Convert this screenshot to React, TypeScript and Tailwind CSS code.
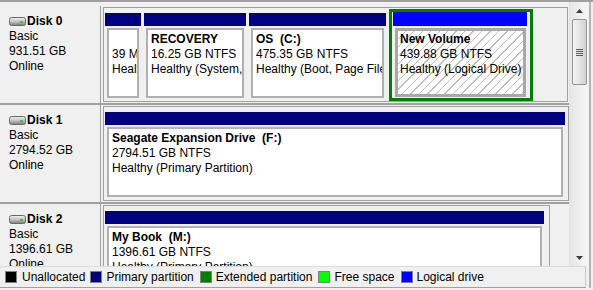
import React from 'react'

const font = "font-['Liberation_Sans',Arial,sans-serif]"

function DiskIcon() {
  return (
    <svg width="17" height="9" viewBox="0 0 17 9" className="shrink-0 mr-[1px]">
      <defs>
        <linearGradient id="dk" x1="0" y1="0" x2="0" y2="1">
          <stop offset="0" stopColor="#f2f2f2" />
          <stop offset="0.5" stopColor="#c4c4c4" />
          <stop offset="1" stopColor="#7a7a7a" />
        </linearGradient>
      </defs>
      <rect x="0.5" y="0.5" width="16" height="8" rx="2" fill="url(#dk)" stroke="#6a6a6a" />
      <rect x="11" y="4" width="3" height="2" fill="#3cc43c" />
    </svg>
  )
}

function Label({ name, size, last }: { name: string; size: string; last?: boolean }) {
  return (
    <div className="w-[101px] shrink-0 border-r border-[#a0a0a0] pl-[9px] pt-[8px]">
      <div className="flex items-center h-[15px] font-bold">
        <span className="-ml-[0px]"><DiskIcon /></span>
        {name}
      </div>
      <div className="h-[15px]">Basic</div>
      <div className="h-[15px]">{size}</div>
      <div className={last ? 'h-[15px]' : 'h-[15px]'}>Online</div>
    </div>
  )
}

function Part({ w, name, size, status }: { w: string; name: string; size: string; status: string }) {
  return (
    <div className={`${w} shrink-0 pr-[3px] pt-[5px] flex flex-col`}>
      <div className="h-[13px] bg-[#000080]" />
      <div className="mt-[2px] mx-[2px] h-[70px] border-2 border-[#b0b0b0] bg-white pl-[3px] pt-[2px] overflow-hidden whitespace-pre">
        <div className="h-[15px] font-bold">{name}</div>
        <div className="h-[15px]">{size}</div>
        <div className="h-[15px]">{status}</div>
      </div>
    </div>
  )
}

function NewVolume() {
  return (
    <div className="w-[144px] h-[92px] shrink-0 mt-[1px] border-[3px] border-[#008000] pl-[1px] pr-[3px] flex flex-col">
      <div className="h-[14px] bg-[#0000ff]" />
      <div className="mt-[2px] ml-[2px] mr-[1px] h-[69px] border-[3px] border-[#a8a8a8] pl-[2px] pt-[1px] overflow-hidden whitespace-pre bg-[repeating-linear-gradient(135deg,#ffffff_0px,#ffffff_5px,#bdbdbd_5px,#bdbdbd_6px)]">
        <div className="h-[15px] font-bold">New Volume</div>
        <div className="h-[15px]">439.88 GB NTFS</div>
        <div className="h-[15px]">Healthy (Logical Drive)</div>
      </div>
    </div>
  )
}

function Row({ name, size, area, children }: { name: string; size: string; area: string; children: React.ReactNode }) {
  return (
    <div className="flex h-[97px] shrink-0">
      <Label name={name} size={size} />
      <div className={`${area} ml-[2px] mt-[1px] h-[95px] border border-[#a0a0a0] pl-[1px] flex`}>{children}</div>
    </div>
  )
}

export default function App() {
  return (
    <div className={`${font} text-[12px] leading-[15px] text-black w-[593px] h-[290px] bg-[#f0f0f0] overflow-hidden border-t-2 border-[#a0a0a0]`}>
      <div className="flex h-[264px]">
        <div className="w-[569px] overflow-hidden flex flex-col pt-[4px]">
          <Row name="Disk 0" size="931.51 GB" area="w-[465px]">
            <Part w="w-[39px]" name="" size="39 MB" status="Healthy (OEM Partition)" />
            <Part w="w-[105px]" name="RECOVERY" size="16.25 GB NTFS" status="Healthy (System, Active, Primary Partition)" />
            <Part w="w-[140px]" name="OS  (C:)" size="475.35 GB NTFS" status="Healthy (Boot, Page File, Crash Dump, Primary Partition)" />
            <NewVolume />
          </Row>
          <div className="h-[2px] shrink-0 bg-[#a0a0a0]" />
          <Row name="Disk 1" size="2794.52 GB" area="w-[466px]">
            <Part w="w-[463px]" name="Seagate Expansion Drive  (F:)" size="2794.51 GB NTFS" status="Healthy (Primary Partition)" />
          </Row>
          <div className="h-[2px] shrink-0 bg-[#a0a0a0]" />
          <Row name="Disk 2" size="1396.61 GB" area="w-[447px]">
            <Part w="w-[442px]" name="My Book  (M:)" size="1396.61 GB NTFS" status="Healthy (Primary Partition)" />
          </Row>
        </div>
        <div className="w-[19px] shrink-0 border-l border-[#e2e2e2] bg-gradient-to-r from-[#e6e6e6] to-[#f7f7f7] flex flex-col items-center">
          <div className="h-[17px] w-full flex items-center justify-center">
            <svg width="7" height="4" viewBox="0 0 7 4"><path d="M0 4 L3.5 0 L7 4 Z" fill="#3c3c3c" /></svg>
          </div>
          <div className="w-[15px] h-[66px] rounded-[2px] border border-[#979797] bg-gradient-to-r from-[#f3f3f3] via-[#e4e4e4] to-[#cfcfcf] flex flex-col items-center justify-center gap-[1px]">
            <div className="w-[7px] h-[1px] bg-[#5a5a5a]" />
            <div className="w-[7px] h-[1px] bg-[#5a5a5a]" />
            <div className="w-[7px] h-[1px] bg-[#5a5a5a]" />
            <div className="w-[7px] h-[1px] bg-[#5a5a5a]" />
          </div>
          <div className="flex-1" />
          <div className="h-[17px] w-full flex items-center justify-center">
            <svg width="7" height="4" viewBox="0 0 7 4"><path d="M0 0 L3.5 4 L7 0 Z" fill="#3c3c3c" /></svg>
          </div>
        </div>
        <div className="w-[5px] shrink-0 flex">
          <div className="w-[1px]" />
          <div className="w-[2px] bg-[#b4b4b4]" />
        </div>
      </div>
      <div className="flex h-[22px]">
        <div className="w-[586px] border-t border-[#dadada] border-b border-r border-b-[#a0a0a0] border-r-[#c8c8c8] flex items-center pl-[5px] bg-[#f0f0f0]">
          <div className="w-[12px] h-[12px] bg-black border border-[#808080]" />
          <span className="ml-[5px] mr-[5px]">Unallocated</span>
          <div className="w-[12px] h-[12px] bg-[#000080] border border-[#808080]" />
          <span className="ml-[4px] mr-[6px]">Primary partition</span>
          <div className="w-[12px] h-[12px] bg-[#008000] border border-[#808080]" />
          <span className="ml-[4px] mr-[6px]">Extended partition</span>
          <div className="w-[12px] h-[12px] bg-[#00ff00] border border-[#808080]" />
          <span className="ml-[4px] mr-[6px]">Free space</span>
          <div className="w-[12px] h-[12px] bg-[#0000ff] border border-[#808080]" />
          <span className="ml-[4px]">Logical drive</span>
        </div>
        <div className="w-[7px] flex">
          <div className="w-[3px]" />
          <div className="w-[2px] bg-[#b4b4b4]" />
        </div>
      </div>
    </div>
  )
}
